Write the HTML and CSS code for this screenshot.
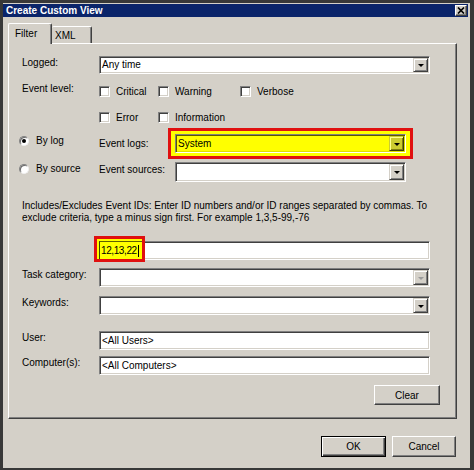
FILE: index.html
```html
<!DOCTYPE html>
<html>
<head>
<meta charset="utf-8">
<title>Create Custom View</title>
<link rel="stylesheet" href="styles.css">
</head>
<body>
<div class="window">
  <div class="titlebar">
    <span class="title">Create Custom View</span>
    <span class="close"><svg width="8" height="7" viewBox="0 0 8 7"><path d="M1 0.5 L7 6.5 M7 0.5 L1 6.5" stroke="#000" stroke-width="1.7" fill="none"/></svg></span>
  </div>
  <div class="client">
    <div class="tabs">
      <div class="tab active">Filter</div>
      <div class="tab inactive">XML</div>
    </div>
    <div class="panel">
      <div class="row r-logged">
        <span class="label">Logged:</span>
        <div class="field combo w-full h18"><span class="value">Any time</span><span class="drop"><i class="arrow"></i></span></div>
      </div>

      <div class="row r-check r-check1">
        <span class="label label-check">Event level:</span>
        <div class="checks">
          <span class="check c1"><span class="box"></span>Critical</span>
          <span class="check c2"><span class="box"></span>Warning</span>
          <span class="check"><span class="box"></span>Verbose</span>
        </div>
      </div>

      <div class="row r-check r-check2">
        <span class="label"></span>
        <div class="checks">
          <span class="check c1"><span class="box"></span>Error</span>
          <span class="check c2"><span class="box"></span>Information</span>
        </div>
      </div>

      <div class="row r-bylog">
        <span class="opt"><span class="radio on"></span>By log</span>
        <span class="sublabel s-logs">Event logs:</span>
        <div class="highlight">
          <div class="field combo w-sub yellow"><span class="value">System</span><span class="drop"><i class="arrow"></i></span></div>
        </div>
      </div>

      <div class="row r-bysource">
        <span class="opt"><span class="radio"></span>By source</span>
        <span class="sublabel s-sources">Event sources:</span>
        <div class="field combo w-sub h20"><span class="drop"><i class="arrow"></i></span></div>
      </div>

      <p class="desc">Includes/Excludes Event IDs: Enter ID numbers and/or ID ranges separated by commas. To exclude criteria, type a minus sign first. For example 1,3,5-99,-76</p>

      <div class="row r-id">
        <span class="label"></span>
        <div class="field w-full idfield">
          <span class="id-hl"><span class="id-inner"><span class="id-text">12,13,22</span><span class="caret"></span></span></span>
        </div>
      </div>

      <div class="row r-task">
        <span class="label">Task category:</span>
        <div class="field combo w-full"><span class="drop"><i class="arrow disabled"></i></span></div>
      </div>

      <div class="row r-keywords">
        <span class="label">Keywords:</span>
        <div class="field combo w-full"><span class="drop"><i class="arrow"></i></span></div>
      </div>

      <div class="row r-user">
        <span class="label">User:</span>
        <div class="field w-full"><span class="value">&lt;All Users&gt;</span></div>
      </div>

      <div class="row r-computer">
        <span class="label">Computer(s):</span>
        <div class="field w-full"><span class="value">&lt;All Computers&gt;</span></div>
      </div>

      <div class="row r-clear">
        <button class="btn btn-clear">Clear</button>
      </div>
    </div>

    <div class="footer">
      <button class="btn btn-ok">OK</button>
      <button class="btn btn-cancel">Cancel</button>
    </div>
  </div>
</div>
</body>
</html>
```
FILE: styles.css
```css
html, body {
  margin: 0;
}
body {
  width: 474px;
  height: 470px;
  box-sizing: border-box;
  padding: 3px 4px 2px 3px;
  background: #383838;
  font-family: "Liberation Sans", Arial, sans-serif;
  font-size: 10px;
  color: #000;
  overflow: hidden;
}
.window {
  height: 465px;
  box-sizing: border-box;
  padding-top: 1px;
  background: #d4d0c8;
  display: flex;
  flex-direction: column;
}
.titlebar {
  height: 13px;
  margin-right: 2px;
  padding: 0 1px 0 3px;
  background: #0a246a;
  color: #fff;
  font-weight: bold;
  display: flex;
  align-items: center;
  justify-content: space-between;
  line-height: 13px;
}
.close {
  width: 12px;
  height: 11px;
  box-sizing: border-box;
  background: #d4d0c8;
  border: 1px solid;
  border-color: #fff #404040 #404040 #fff;
  box-shadow: inset -1px -1px #808080;
  display: flex;
  align-items: center;
  justify-content: center;
}
.close svg { display: block; }

.client {
  padding: 6px 13px 0 5px;
  display: flex;
  flex-direction: column;
}

/* tabs */
.tabs {
  height: 20px;
  display: flex;
  align-items: flex-end;
}
.tab {
  box-sizing: border-box;
  background: #d4d0c8;
  border-top: 1px solid #fff;
  border-left: 1px solid #fff;
  border-right: 1px solid #404040;
  box-shadow: inset -1px 0 #808080;
  border-radius: 2px 2px 0 0;
}
.tab.active {
  width: 44px;
  height: 21px;
  margin-bottom: -1px;
  padding: 3px 0 0 6px;
  line-height: 13px;
  position: relative;
  z-index: 1;
}
.tab.inactive {
  width: 40px;
  height: 17px;
  padding: 2px 0 0 3px;
  line-height: 13px;
  border-left: none;
}

/* panel */
.panel {
  height: 376px;
  box-sizing: border-box;
  border-top: 1px solid #fff;
  border-left: 1px solid #fff;
  border-right: 1px solid #404040;
  border-bottom: 1px solid #404040;
  box-shadow: inset -1px -1px #808080;
  padding: 12px 16px 0 13px;
  display: flex;
  flex-direction: column;
}
.row {
  display: flex;
  align-items: flex-start;
}
.label {
  width: 77px;
  flex: none;
  line-height: 12px;
  padding-top: 1px;
}

/* fields */
.field {
  height: 19px;
  box-sizing: border-box;
  background: #fff;
  border: 1px solid;
  border-color: #808080 #fff #fff #808080;
  box-shadow: inset 1px 1px #404040, inset -1px -1px #d4d0c8;
  display: flex;
  align-items: center;
  flex: none;
}
.h18 { height: 18px; }
.h20 { height: 20px; }
.w-full { width: 331px; }
.w-sub { width: 231px; }
.value {
  padding-left: 2px;
  line-height: 12px;
  white-space: nowrap;
}
.drop {
  margin: 1px 1px 1px auto;
  width: 15px;
  align-self: stretch;
  box-sizing: border-box;
  background: #d4d0c8;
  border: 1px solid;
  border-color: #d4d0c8 #404040 #404040 #d4d0c8;
  box-shadow: inset 1px 1px #fff, inset -1px -1px #808080;
  display: flex;
  align-items: center;
  justify-content: center;
}
.arrow {
  width: 0;
  height: 0;
  border-left: 3px solid transparent;
  border-right: 3px solid transparent;
  border-top: 3px solid #000;
  margin-top: 1px;
}
.arrow.disabled {
  border-top-color: #9a9a9a;
}

/* checkboxes */
.r-check { height: 13px; align-items: center; }
.r-check1 { margin-top: 11px; }
.r-check2 { margin-top: 13px; }
.label-check { padding-top: 0; margin-bottom: 5px; }
.checks { display: flex; align-items: center; }
.check {
  display: flex;
  align-items: center;
  gap: 6px;
  line-height: 12px;
  white-space: nowrap;
}
.c1 { width: 59px; }
.c2 { width: 82px; }
.box {
  width: 11px;
  height: 11px;
  box-sizing: border-box;
  background: #fff;
  border: 1px solid;
  border-color: #808080 #fff #fff #808080;
  box-shadow: inset 1px 1px #404040, inset -1px -1px #d4d0c8;
  flex: none;
}

/* radio rows */
.r-bylog { margin-top: 4px; height: 31px; align-items: center; }
.r-bysource { margin-top: 3px; height: 20px; align-items: center; }
.opt {
  width: 80px;
  margin-left: -3px;
  margin-bottom: 5px;
  display: flex;
  align-items: center;
  gap: 7px;
  line-height: 12px;
  flex: none;
}
.r-bysource .opt { margin-bottom: 6px; }
.radio {
  width: 10px;
  height: 10px;
  box-sizing: border-box;
  border-radius: 50%;
  background: #fff;
  border: 1px solid;
  border-color: #808080 #f0f0f0 #f0f0f0 #808080;
  box-shadow: inset 1px 1px #6a6a6a;
  display: flex;
  align-items: center;
  justify-content: center;
  flex: none;
}
.radio.on::after {
  content: "";
  width: 4px;
  height: 4px;
  border-radius: 50%;
  background: #000;
}
.sublabel {
  flex: none;
  line-height: 12px;
}
.s-logs { width: 69px; }
.s-sources { width: 76px; margin-bottom: 4px; }
.highlight {
  border: 3px solid #e01010;
  padding: 3px 4px;
  background: #ffff00;
  flex: none;
}
.field.yellow {
  background: #ffff00;
  box-shadow: inset 1px 1px #5a5a00, inset -1px -1px #e0e000;
}
.field.yellow .drop {
  background: #cccc30;
  border-color: #cccc30 #3a3a00 #3a3a00 #cccc30;
  box-shadow: inset 1px 1px #ffff90, inset -1px -1px #808010;
}

/* description */
.desc {
  margin: 18px 0 0;
  line-height: 12px;
}

/* id field */
.r-id { margin-top: 17px; }
.idfield { position: relative; }
.id-hl {
  position: absolute;
  left: -6px;
  top: -6px;
  width: 51px;
  height: 26px;
  box-sizing: border-box;
  border: 3px solid #e01010;
  background: #ffff00;
  padding: 2px 0 0 2px;
}
.id-inner {
  height: 18px;
  box-sizing: border-box;
  border-left: 1px solid #404000;
  border-top: 1px solid #606000;
  display: flex;
  align-items: center;
  padding-left: 1px;
}
.id-text {
  letter-spacing: -0.4px;
  line-height: 12px;
}
.caret {
  width: 1px;
  height: 12px;
  background: #000;
  margin-left: 1px;
}

.r-task { margin-top: 8px; }
.r-keywords { margin-top: 9px; }
.r-user { margin-top: 16px; }
.r-computer { margin-top: 6px; }
.r-clear { margin-top: 10px; justify-content: flex-end; }

/* buttons */
.btn {
  box-sizing: border-box;
  height: 20px;
  padding: 0;
  font: inherit;
  color: #000;
  background: #d4d0c8;
  border: 1px solid;
  border-color: #fff #404040 #404040 #fff;
  box-shadow: inset -1px -1px #808080;
  display: flex;
  align-items: center;
  justify-content: center;
}
.btn-clear { width: 66px; }
.footer {
  margin-top: 17px;
  padding-right: 1px;
  display: flex;
  justify-content: flex-end;
  gap: 6px;
}
.btn-ok {
  width: 65px;
  height: 21px;
  border: 1px solid #000;
  box-shadow: inset 1px 1px #fff, inset -1px -1px #404040, inset -2px -2px #808080;
}
.btn-cancel {
  width: 64px;
  height: 21px;
}
```
